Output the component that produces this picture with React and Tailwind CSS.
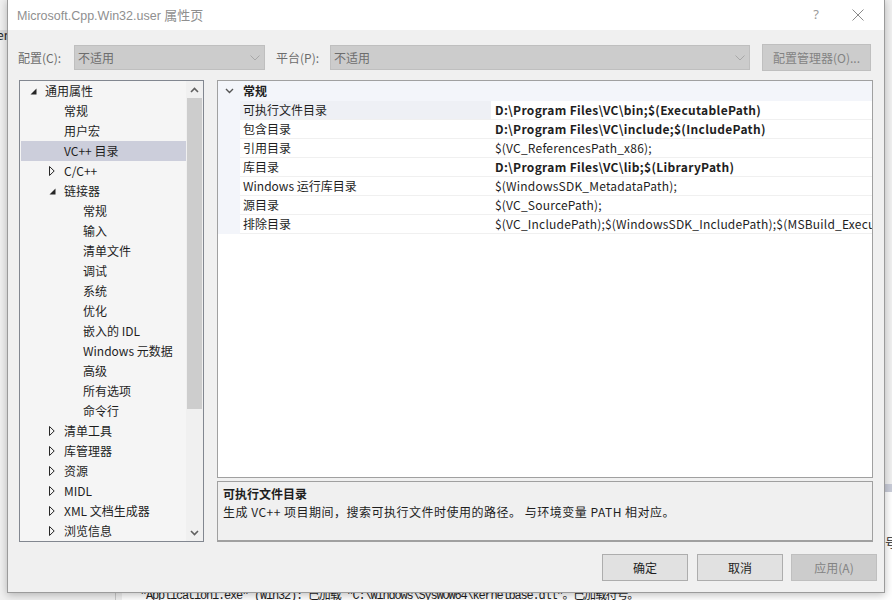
import React from "react";

const UI = { fontFamily: "'Noto Sans CJK SC', 'Noto Sans', sans-serif" };

function ExpandedTri() {
  return (
    <svg width="7" height="7" viewBox="0 0 7 7" className="block">
      <polygon points="6.5,0.5 6.5,6.5 0.5,6.5" fill="#262626" />
    </svg>
  );
}
function CollapsedTri() {
  return (
    <svg width="6" height="10" viewBox="0 0 6 10" className="block">
      <polygon points="0.5,0.5 5.2,5 0.5,9.5" fill="none" stroke="#262626" strokeWidth="1" />
    </svg>
  );
}
function DropChevron() {
  return (
    <svg width="10" height="6" viewBox="0 0 10 6" className="block">
      <polyline points="0.5,0.5 5,5 9.5,0.5" fill="none" stroke="#a8a8a8" strokeWidth="1" />
    </svg>
  );
}
function ScrollArrow({ up }) {
  return (
    <svg width="9" height="6" viewBox="0 0 9 6" className="block">
      <polyline
        points={up ? "1,5 4.5,1.5 8,5" : "1,1 4.5,4.5 8,1"}
        fill="none"
        stroke="#606060"
        strokeWidth="1.6"
      />
    </svg>
  );
}

const tree = [
  { t: "通用属性", lvl: 0, tri: "e" },
  { t: "常规", lvl: 1 },
  { t: "用户宏", lvl: 1 },
  { t: "VC++ 目录", lvl: 1, sel: true },
  { t: "C/C++", lvl: 1, tri: "c" },
  { t: "链接器", lvl: 1, tri: "e" },
  { t: "常规", lvl: 2 },
  { t: "输入", lvl: 2 },
  { t: "清单文件", lvl: 2 },
  { t: "调试", lvl: 2 },
  { t: "系统", lvl: 2 },
  { t: "优化", lvl: 2 },
  { t: "嵌入的 IDL", lvl: 2 },
  { t: "Windows 元数据", lvl: 2 },
  { t: "高级", lvl: 2 },
  { t: "所有选项", lvl: 2 },
  { t: "命令行", lvl: 2 },
  { t: "清单工具", lvl: 1, tri: "c" },
  { t: "库管理器", lvl: 1, tri: "c" },
  { t: "资源", lvl: 1, tri: "c" },
  { t: "MIDL", lvl: 1, tri: "c" },
  { t: "XML 文档生成器", lvl: 1, tri: "c" },
  { t: "浏览信息", lvl: 1, tri: "c" },
];

const rows = [
  { n: "可执行文件目录", v: "D:\\Program Files\\VC\\bin;$(ExecutablePath)", b: true, sel: true },
  { n: "包含目录", v: "D:\\Program Files\\VC\\include;$(IncludePath)", b: true },
  { n: "引用目录", v: "$(VC_ReferencesPath_x86);" },
  { n: "库目录", v: "D:\\Program Files\\VC\\lib;$(LibraryPath)", b: true },
  { n: "Windows 运行库目录", v: "$(WindowsSDK_MetadataPath);" },
  { n: "源目录", v: "$(VC_SourcePath);" },
  { n: "排除目录", v: "$(VC_IncludePath);$(WindowsSDK_IncludePath);$(MSBuild_ExecutablePath);$(VC_LibraryPath_x86);" },
];

function TreeRow({ item }) {
  const triLeft = item.lvl === 0 ? "w-[24px] pl-[9px]" : "w-[43px] pl-[28px]";
  return (
    <div className={`h-[20px] flex items-center ${item.sel ? "bg-[#cccedb]" : ""}`}>
      {item.lvl === 2 ? (
        <div className="w-[62px] shrink-0" />
      ) : (
        <div className={`${triLeft} shrink-0 flex items-center`}>
          {item.tri === "e" ? <ExpandedTri /> : item.tri === "c" ? <CollapsedTri /> : null}
        </div>
      )}
      <span className="text-[12px] leading-[20px] text-[#1e1e1e] whitespace-nowrap">{item.t}</span>
    </div>
  );
}

function Btn({ children, disabled, w = "w-[86px]" }) {
  return (
    <div
      className={`${w} h-[27px] flex items-center justify-center text-[12px] border ${
        disabled ? "bg-[#cccccc] border-[#bfbfbf] text-[#838383]" : "bg-[#e1e1e1] border-[#adadad] text-[#1e1e1e]"
      }`}
    >
      {children}
    </div>
  );
}

export default function App() {
  return (
    <div className="relative w-[892px] h-[600px] overflow-hidden bg-[#f0f0f0]" style={UI}>
      {/* background IDE behind dialog */}
      <div className="absolute left-0 top-[30px] w-[10px] h-[10px] bg-[#dcdcdc] text-[12px] leading-[10px] text-[#1e1e1e] overflow-hidden whitespace-nowrap">
        <span className="ml-[-3px]">er</span>
      </div>
      <div className="absolute left-[884px] top-[484px] w-[10px] h-[8px] bg-[#c9ccd8]" />
      <div className="absolute left-[884px] top-[492px] w-[10px] h-[108px] bg-white" />
      <div className="absolute left-[885px] top-[536px] text-[12px] leading-[14px] text-[#1e1e1e] whitespace-nowrap">号</div>
      <div className="absolute left-0 top-[590px] w-[892px] h-[10px] flex">
        <div className="w-[115px] h-full bg-[#f0f0f0]" />
        <div className="w-[1px] h-full bg-[#c8c8c8]" />
        <div className="w-[6px] h-full bg-[#f0f0f0]" />
        <div className="flex-1 h-full bg-white overflow-hidden">
          <div
            className="pl-[18px] text-[12px] leading-[12px] tracking-[-1.2px] text-[#1e1e1e] whitespace-nowrap"
            style={{ fontFamily: "'Liberation Mono', 'Noto Sans CJK SC', monospace" }}
          >
            {'"Application1.exe" (Win32): 已加载 "C:\\Windows\\SysWOW64\\kernelbase.dll"。已加载符号。'}
          </div>
        </div>
      </div>

      {/* dialog window */}
      <div className="absolute left-[7px] top-[-1px] w-[878px] h-[594px] border border-[#9b9b9b] bg-[#f0f0f0] shadow-[0_2px_8px_rgba(0,0,0,0.25)] flex flex-col">
        {/* title bar */}
        <div className="h-[30px] bg-white flex items-center shrink-0">
          <span className="pl-[9px] text-[12.5px] text-[#8f8f8f] whitespace-nowrap" style={{ fontFamily: "'Liberation Sans', 'Noto Sans CJK SC', sans-serif" }}>
            Microsoft.Cpp.Win32.user <span className="text-[13px]" style={UI}>属性页</span>
          </span>
          <div className="flex-1" />
          <span className="text-[13px] text-[#9a9a9a] mr-[33px]" style={{ fontFamily: "'Noto Sans', sans-serif" }}>?</span>
          <svg width="12" height="12" viewBox="0 0 12 12" className="mr-[20px]">
            <path d="M0.5 0.5 L11.5 11.5 M11.5 0.5 L0.5 11.5" stroke="#8a8a8a" strokeWidth="1" />
          </svg>
        </div>

        {/* config row */}
        <div className="mt-[14px] h-[27px] flex items-center pl-[10px] shrink-0">
          <span className="w-[56px] text-[12px] text-[#6d6d6d]">配置(C):</span>
          <div className="w-[191px] h-[25px] bg-[#cccccc] border border-[#bfbfbf] flex items-center pl-[3px] pr-[4px]">
            <span className="flex-1 text-[12px] text-[#6d6d6d]">不适用</span>
            <DropChevron />
          </div>
          <span className="ml-[11px] w-[54px] text-[12px] text-[#6d6d6d]">平台(P):</span>
          <div className="w-[420px] h-[25px] bg-[#cccccc] border border-[#bfbfbf] flex items-center pl-[3px] pr-[4px]">
            <span className="flex-1 text-[12px] text-[#6d6d6d]">不适用</span>
            <DropChevron />
          </div>
          <div className="ml-[12px]">
            <Btn disabled w="w-[109px]">配置管理器(O)...</Btn>
          </div>
        </div>

        {/* main area */}
        <div className="mt-[9px] flex pl-[11px] shrink-0">
          {/* tree */}
          <div className="w-[185px] h-[462px] border border-[#828790] bg-[#f5f5f5] flex">
            <div className="flex-1 pl-[1px] overflow-hidden">
              {tree.map((it, i) => (
                <TreeRow key={i} item={it} />
              ))}
            </div>
            <div className="w-[17px] h-full bg-[#f0f0f0] flex flex-col items-center">
              <div className="h-[17px] flex items-center justify-center"><ScrollArrow up /></div>
              <div className="w-[15px] h-[311px] bg-[#cdcdcd]" />
              <div className="flex-1" />
              <div className="h-[17px] flex items-center justify-center"><ScrollArrow /></div>
            </div>
          </div>

          {/* right side */}
          <div className="ml-[13px] w-[656px] flex flex-col">
            <div className="h-[398px] border border-[#a0a0a0] bg-white overflow-hidden">
              <div className="h-[20px] flex items-center bg-[#f3f5fa]">
                <div className="w-[22px] flex justify-center">
                  <svg width="9" height="6" viewBox="0 0 9 6">
                    <polyline points="1,1 4.5,4.5 8,1" fill="none" stroke="#555" strokeWidth="1.4" />
                  </svg>
                </div>
                <span className="pl-[3px] text-[12px] font-bold text-[#1e1e1e]">常规</span>
              </div>
              {rows.map((r, i) => (
                <div key={i} className="h-[19px] flex">
                  <div className="w-[22px] shrink-0 bg-[#f3f5fa]" />
                  <div
                    className={`w-[251px] shrink-0 pl-[3px] flex items-center border-b border-[#f0f0f0] ${
                      r.sel ? "bg-[#eef0f5]" : "bg-white"
                    }`}
                  >
                    <span className="text-[12px] text-[#1e1e1e] whitespace-nowrap">{r.n}</span>
                  </div>
                  <div className="flex-1 pl-[4px] flex items-center border-b border-[#f0f0f0] overflow-hidden">
                    <span
                      className={`text-[12px] text-[#1e1e1e] whitespace-nowrap ${
                        r.b ? "font-bold tracking-[0.32px]" : "tracking-[0.2px]"
                      }`}
                    >
                      {r.v}
                    </span>
                  </div>
                </div>
              ))}
            </div>
            <div className="mt-[3px] h-[61px] border border-[#a0a0a0] border-b-2 bg-[#f0f0f0] pl-[5px] pt-[3px]">
              <div className="text-[12px] leading-[18px] font-bold text-[#1e1e1e]">可执行文件目录</div>
              <div className="text-[12px] leading-[18px] tracking-[0.5px] text-[#1e1e1e] whitespace-nowrap">
                生成 VC++ 项目期间，搜索可执行文件时使用的路径。 与环境变量 PATH 相对应。
              </div>
            </div>
          </div>
        </div>

        {/* buttons */}
        <div className="mt-[12px] flex justify-end pr-[7px] shrink-0">
          <Btn>确定</Btn>
          <div className="ml-[9px]"><Btn>取消</Btn></div>
          <div className="ml-[8px]"><Btn disabled>应用(A)</Btn></div>
        </div>
      </div>
    </div>
  );
}
